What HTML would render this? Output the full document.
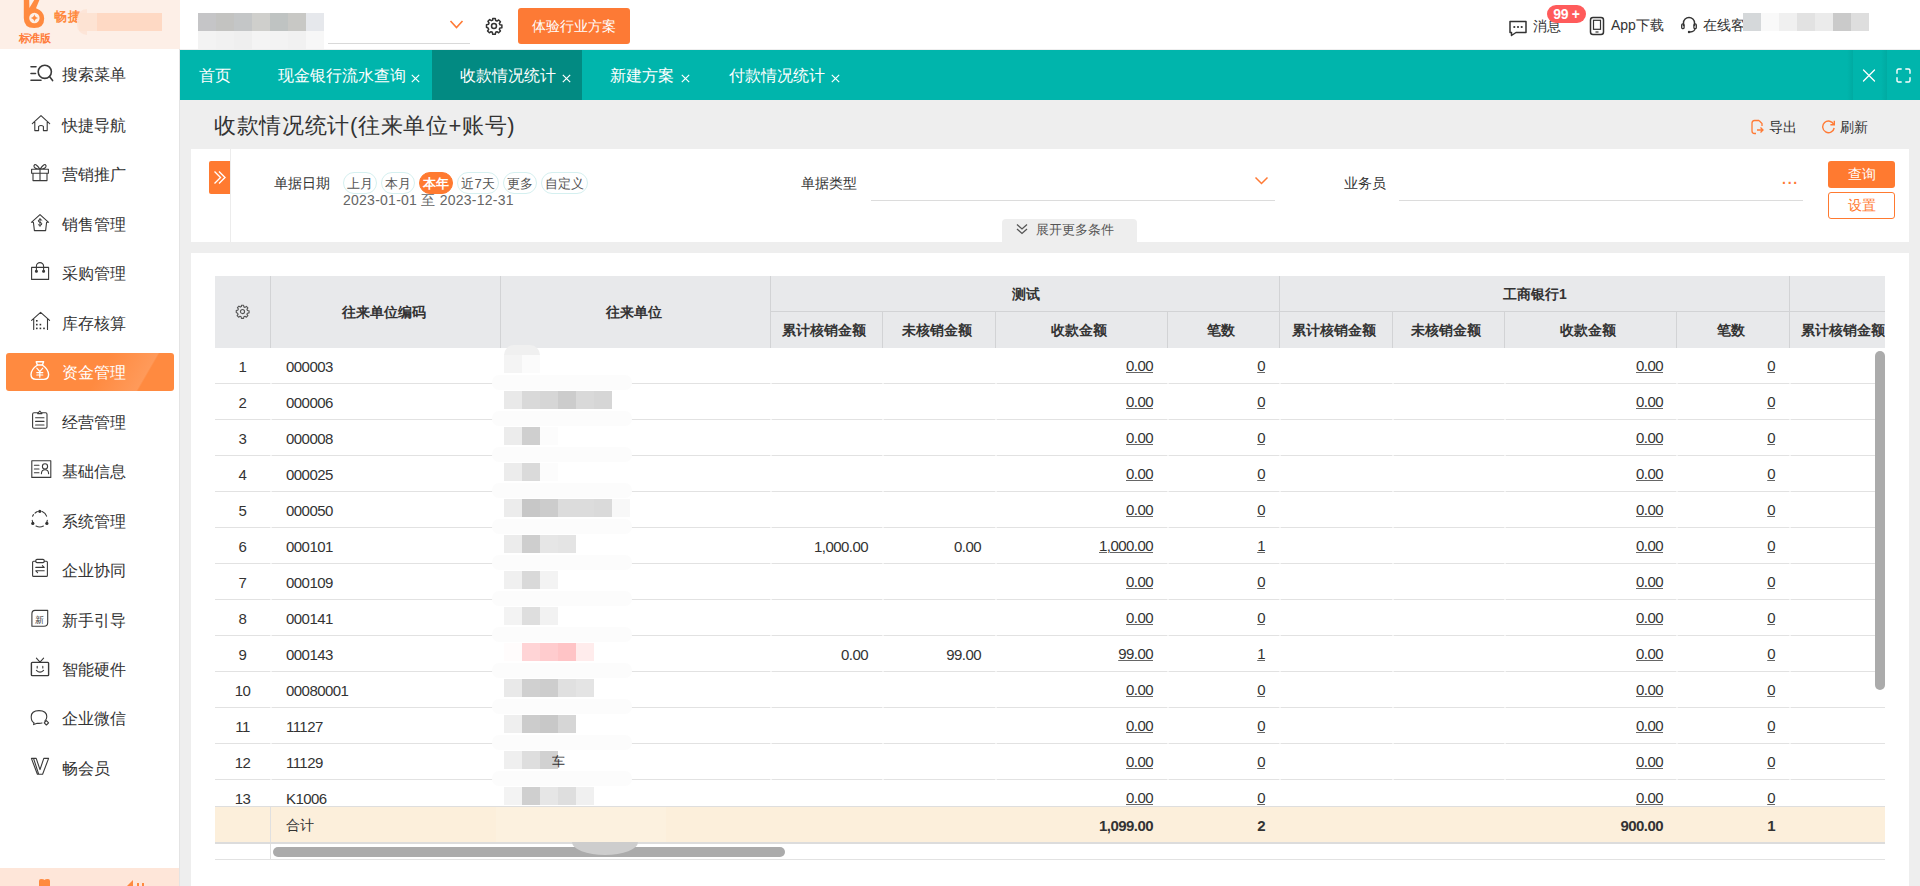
<!DOCTYPE html>
<html><head><meta charset="utf-8"><style>
*{box-sizing:border-box;margin:0;padding:0}
html,body{width:1920px;height:886px;overflow:hidden;background:#eeeeee;font-family:"Liberation Sans",sans-serif;color:#333}
.a{position:absolute}
#side{position:absolute;left:0;top:0;width:180px;height:886px;background:#fff;border-right:1px solid #e4e4e4}
#logo{position:absolute;left:0;top:0;width:180px;height:49px;background:#fdefe7}
.mi{position:absolute;left:0;width:179px;height:38px;font-size:16px;line-height:38px;color:#333;white-space:nowrap}
.mi span{position:absolute;left:62px;top:0}
.mi svg{position:absolute;left:31px;top:10px}
.mi.act{left:6px;width:168px;background:#ff8a44;border-radius:3px;color:#fff}
.mi.act span{left:56px}
.mi.act svg{left:25px}
#hdr{position:absolute;left:180px;top:0;width:1740px;height:49px;background:#fff}
#tabs{position:absolute;left:180px;top:50px;width:1740px;height:50px;background:#00b5ac}
.tab{position:absolute;top:0;height:50px;line-height:50px;font-size:16px;color:#fff;white-space:nowrap}
.tab .x{font-size:14px;margin-left:4px}
.t14{font-size:14px;line-height:20px;white-space:nowrap}
.chip{position:absolute;top:172px;height:22px;border:1px solid #d5f0f0;border-radius:11px;font-size:13px;line-height:22px;text-align:center;color:#555;background:#fff}
.chip.on{background:#ff7a30;border-color:#ff7a30;color:#fff;font-weight:bold}
.th{position:absolute;background:#e8e9eb;font-size:14px;font-weight:bold;color:#333;text-align:center;white-space:nowrap;overflow:hidden}
.vl{position:absolute;width:1px;background:#d6d6d6}
.hl{position:absolute;height:1px;background:#e2e2e2}
.td{position:absolute;font-size:15px;line-height:20px;color:#333;white-space:nowrap;letter-spacing:-0.55px}
.u{text-decoration:underline;text-decoration-thickness:1px;text-underline-offset:1px;text-decoration-color:#666}

</style></head><body>
<div id="side"><div id="logo">
<svg class="a" style="left:22px;top:0" width="24" height="29" viewBox="0 0 24 29">
<path d="M1.8 0 H7.2 L7.4 8 L12.2 0 H17.4 L14 8.2 Q22.2 11 22.2 18.5 Q22.2 28 12.2 28 Q1.8 28 1.8 18 Z" fill="#ff8a3f"/>
<circle cx="12.4" cy="18" r="5.2" fill="#fdefe7"/>
<path d="M12.4 14.2 Q13 17.4 16.2 18 Q13 18.6 12.4 21.8 Q11.8 18.6 8.6 18 Q11.8 17.4 12.4 14.2Z" fill="#ff8a3f"/>
</svg>
<div class="a" style="left:18.5px;top:30px;font-size:11px;line-height:16px;color:#ff7d3b;font-weight:bold;letter-spacing:-0.5px">标准版</div>
<div class="a" style="left:53.5px;top:8px;font-size:13px;line-height:18px;color:#ff8a3f;font-weight:bold;letter-spacing:1px">畅捷</div>
<div class="a" style="left:77px;top:9px;width:10px;height:26px;background:rgba(253,228,214,0.93);border-radius:10px 0 0 10px"></div>
<div class="a" style="left:79px;top:13px;width:83px;height:18px;background:#fed9c4"></div>
<div class="a" style="left:79px;top:13px;width:18px;height:18px;background:#fde3d3"></div>
</div>
<div class="mi" style="top:56px"><span>搜索菜单</span></div>
<div class="mi" style="top:107px"><span>快捷导航</span></div>
<div class="mi" style="top:156px"><span>营销推广</span></div>
<div class="mi" style="top:206px"><span>销售管理</span></div>
<div class="mi" style="top:255px"><span>采购管理</span></div>
<div class="mi" style="top:305px"><span>库存核算</span></div>
<div class="a" style="left:6px;top:353px;width:168px;height:38px;background:linear-gradient(120deg,#ff8a40 0%,#ff8a40 55%,#ff9a5a 80%,#ff8a40 81%);border-radius:3px"></div>
<div class="mi" style="top:354px;color:#fff"><span>资金管理</span></div>
<div class="mi" style="top:404px"><span>经营管理</span></div>
<div class="mi" style="top:453px"><span>基础信息</span></div>
<div class="mi" style="top:503px"><span>系统管理</span></div>
<div class="mi" style="top:552px"><span>企业协同</span></div>
<div class="mi" style="top:602px"><span>新手引导</span></div>
<div class="mi" style="top:651px"><span>智能硬件</span></div>
<div class="mi" style="top:700px"><span>企业微信</span></div>
<div class="mi" style="top:750px"><span>畅会员</span></div>
<svg class="a" style="left:0;top:0" width="180" height="886" viewBox="0 0 180 886">
<g fill="none" stroke="#3a3a3a" stroke-width="1.1" stroke-linecap="round" stroke-linejoin="round">
<path d="M31 66.8h5M31 73.5h4.5M31 80.2h10" stroke-width="1.6"/>
<circle cx="44.8" cy="71.8" r="6.6" stroke-width="1.6"/><path d="M49.5 76.5L52.6 80.6" stroke-width="1.6"/>
<path d="M32.3 123.6L41 115.6L49.7 123.6M34.8 121.3V130.6H38.6V126.4Q41 124.6 43.4 126.4V130.6H47.2V121.3"/>
<path d="M31.6 169.2H48.4V173.2H31.6ZM33 173.2V180.6H47V173.2M40 169.2V180.6M40 169.2Q35.5 162.5 34 165.5Q33.2 168.5 40 169.2M40 169.2Q44.5 162.5 46 165.5Q46.8 168.5 40 169.2"/>
<path d="M40 214.6L48.6 222.3H46.6L45.6 230.6H34.4L33.4 222.3H31.4Z"/>
<path d="M42 220.3Q41.5 219.6 40 219.6Q38.3 219.6 38.3 220.9Q38.3 222.1 40 222.3Q41.8 222.5 41.8 223.9Q41.8 225.3 40 225.3Q38.6 225.3 38.1 224.5M40 218.4V226.4" stroke-width="1"/>
<path d="M31.6 267.4H48.6V279.4H31.6Z"/><path d="M36.4 271.2V266.2A3.6 3.6 0 0 1 43.6 266.2V271.2"/>
<circle cx="36.4" cy="271.2" r="1" fill="#333"/><circle cx="43.6" cy="271.2" r="1" fill="#333"/>
<path d="M31.6 320.4L40.6 312.3L49.6 320.4M33.7 318.6V329.4M47.5 318.6V329.4"/>
<g fill="#333" stroke="none"><rect x="36" y="320" width="1.6" height="1.6"/><rect x="36" y="323.8" width="1.6" height="1.6"/><rect x="39.6" y="323.8" width="1.6" height="1.6"/><rect x="36" y="327.6" width="1.6" height="1.6"/><rect x="39.6" y="327.6" width="1.6" height="1.6"/><rect x="43.2" y="327.6" width="1.6" height="1.6"/></g>
</g>
<g fill="none" stroke="#fff" stroke-width="1.4" stroke-linecap="round" stroke-linejoin="round">
<path d="M36.2 361.8H43.6L42.4 365H37.4Z"/>
<path d="M37.4 365Q31 369.5 31 374.6Q31 379.4 36 379.4H43.8Q48.6 379.4 48.6 374.6Q48.6 369.5 42.4 365"/>
<path d="M36.8 368.2L39.8 371.6L42.8 368.2M39.8 371.6V377.2M36.8 372.6H42.8M36.8 375H42.8" stroke-width="1.2"/>
</g>
<g fill="none" stroke="#3a3a3a" stroke-width="1.1" stroke-linecap="round" stroke-linejoin="round">
<path d="M38 412.8H34Q32.6 412.8 32.6 414.2V427Q32.6 428.2 34 428.2H45.6Q47 428.2 47 427V414.2Q47 412.8 45.6 412.8H41.8"/>
<path d="M37.6 413.6L39.8 411L42 413.6Z"/>
<path d="M35.6 417.8H44M35.6 421.4H44M35.6 425H44"/>
<path d="M31.8 460.8H50.8V477.4H31.8Z"/>
<path d="M34.4 465.2H39M34.4 469H39M34.4 472.8H39"/>
<circle cx="45" cy="466.4" r="2.6"/><path d="M41.4 473.6Q41.6 469.8 45 469.8Q48.4 469.8 48.6 473.6"/>
<path d="M35 513.2A7.6 7.6 0 0 1 37.4 511.5M42.2 511.5A7.6 7.6 0 0 1 46.6 516.2M47.3 520.2A7.6 7.6 0 0 1 46.2 523.5M43.4 526A7.6 7.6 0 0 1 36 526M33.4 523.5A7.6 7.6 0 0 1 32.2 520.2M32.6 516.2A7.6 7.6 0 0 1 33.5 514.6"/>
<g fill="#333" stroke="none"><circle cx="39.8" cy="511.3" r="1.6"/><circle cx="32.8" cy="523.4" r="1.6"/><circle cx="46.9" cy="523.4" r="1.6"/></g>
<path d="M35.8 561.2H33.6Q32.6 561.2 32.6 562.2V575.4Q32.6 576.4 33.6 576.4H46.4Q47.4 576.4 47.4 575.4V562.2Q47.4 561.2 46.4 561.2H44.2"/>
<rect x="35.8" y="559.4" width="8.4" height="3.2" rx="1.2"/>
<path d="M35.8 567.4H44.2L42.4 565.6M44.2 570.8H35.8L37.6 572.6"/>
<path d="M35 610.4H47.7V622.4Q47.7 626.2 43.9 626.2H31.9V614Q31.9 610.4 35 610.4Z"/>
<path d="M32.4 662.4H47.8Q48.6 662.4 48.6 663.2V675Q48.6 675.6 47.8 675.6H32.4Q31.4 675.6 31.4 675V663.2Q31.4 662.4 32.4 662.4Z" stroke-width="1.4"/>
<path d="M36.4 658.2L40 662.2L43.6 658.2M37.2 666.4V668M42.8 666.4V668M36.4 670.4Q40 674 43.6 670.4"/>
<path d="M44.8 721.2Q46.8 719.2 46.8 716.8Q46.8 710.6 39 710.6Q31.2 710.6 31.2 716.8Q31.2 721.5 34 722.7L33.6 724.6L37.2 723.2Q39.6 723.6 42 723"/>
<path d="M46.4 720.6L48.6 722.8L46.4 725L44.2 722.8Z"/>
<path d="M31.4 758.4H36.2L40 769.6L43.8 758.4H48.6L42.6 774.2H37.4ZM33.6 758.6L38.6 773.8"/>
</g>
<text x="39.8" y="622.6" font-size="9" text-anchor="middle" fill="#333" font-family="Liberation Sans">新</text>
</svg>
<div class="a" style="left:0;top:868px;width:179px;height:18px;background:#fee6d9"></div>
<svg class="a" style="left:0;top:868px" width="179" height="18" viewBox="0 0 179 18"><path d="M39 18V13Q39 11 41 11Q44 11 44.5 12Q45 11 48 11Q50 11 50 13V18Z" fill="#ff8a3f"/><path d="M127 18L133 12V18Z" fill="#ff8a3f"/><rect x="137" y="15" width="2" height="3" fill="#ff8a3f"/><rect x="142" y="15" width="2" height="3" fill="#ff8a3f"/></svg>
</div>
<div id="hdr">
<div class="a" style="left:18px;top:13px;width:18px;height:18px;background:#c5c5c7"></div>
<div class="a" style="left:36px;top:13px;width:18px;height:18px;background:#c3c3c1"></div>
<div class="a" style="left:54px;top:13px;width:18px;height:18px;background:#c4c6c7"></div>
<div class="a" style="left:72px;top:13px;width:18px;height:18px;background:#cfcfcc"></div>
<div class="a" style="left:90px;top:13px;width:18px;height:18px;background:#bfc3c2"></div>
<div class="a" style="left:108px;top:13px;width:18px;height:18px;background:#c8c8c5"></div>
<div class="a" style="left:126px;top:13px;width:18px;height:18px;background:#e6e8ec"></div>
<div class="a" style="left:18px;top:31px;width:18px;height:18px;background:#f3f3f3"></div>
<div class="a" style="left:36px;top:31px;width:18px;height:18px;background:#f1f1f1"></div>
<div class="a" style="left:54px;top:31px;width:18px;height:18px;background:#efefef"></div>
<div class="a" style="left:72px;top:31px;width:18px;height:18px;background:#f4f4f4"></div>
<div class="a" style="left:90px;top:31px;width:18px;height:18px;background:#f3f3f3"></div>
<div class="a" style="left:108px;top:31px;width:18px;height:18px;background:#f1f1f1"></div>
<div class="a" style="left:126px;top:31px;width:18px;height:18px;background:#f7f7f7"></div>
<div class="a" style="left:148px;top:43px;width:142px;height:1px;background:#d9d9d9"></div>
<svg class="a" style="left:269px;top:19px" width="15" height="11" viewBox="0 0 15 11"><path d="M1.5 2 L7.5 8.5 L13.5 2" stroke="#ff7a35" stroke-width="1.6" fill="none"/></svg>
<svg class="a" style="left:305px;top:17px" width="18" height="18" viewBox="0 0 24 24"><path d="M10.3 2h3.4l.5 2.6 1.8.8 2.2-1.5 2.4 2.4-1.5 2.2.8 1.8 2.6.5v3.4l-2.6.5-.8 1.8 1.5 2.2-2.4 2.4-2.2-1.5-1.8.8-.5 2.6h-3.4l-.5-2.6-1.8-.8-2.2 1.5-2.4-2.4 1.5-2.2-.8-1.8L2 13.7v-3.4l2.6-.5.8-1.8-1.5-2.2 2.4-2.4 2.2 1.5 1.8-.8z" fill="none" stroke="#333" stroke-width="2" stroke-linejoin="round"/><circle cx="12" cy="12" r="3.3" fill="none" stroke="#333" stroke-width="2"/></svg>
<div class="a" style="left:338px;top:8px;width:112px;height:36px;background:#fd7a35;border-radius:3px;color:#fff;font-size:14px;line-height:36px;text-align:center">体验行业方案</div>
<svg class="a" style="left:1328px;top:19px" width="20" height="20" viewBox="0 0 20 20"><path d="M2 2.5h16v11H8l-4.5 3v-3H2z" fill="none" stroke="#333" stroke-width="1.5" stroke-linejoin="round"/><circle cx="6.3" cy="8" r="1.1" fill="#333"/><circle cx="10" cy="8" r="1.1" fill="#333"/><circle cx="13.7" cy="8" r="1.1" fill="#333"/></svg>
<div class="a" style="left:1353px;top:16px;font-size:14px;line-height:20px;color:#333">消息</div>
<div class="a" style="left:1367px;top:5px;width:39px;height:18px;background:#ff5b5b;border-radius:9px;color:#fff;font-size:14px;font-weight:bold;line-height:18px;text-align:center;letter-spacing:-0.3px">99 +</div>
<svg class="a" style="left:1409px;top:16px" width="16" height="20" viewBox="0 0 16 20"><rect x="1.5" y="1.5" width="13" height="17" rx="2.5" fill="none" stroke="#333" stroke-width="1.5"/><rect x="4.5" y="4.3" width="7" height="9" fill="none" stroke="#333" stroke-width="1.2"/><path d="M6.5 16h3" stroke="#333" stroke-width="1.2"/></svg>
<div class="a" style="left:1431px;top:15px;font-size:14px;line-height:20px;color:#333">App下载</div>
<svg class="a" style="left:1500px;top:15px" width="18" height="19" viewBox="0 0 18 19"><path d="M3.5 11V8a5.5 5.5 0 0 1 11 0v3" fill="none" stroke="#333" stroke-width="1.4"/><rect x="1.7" y="8.8" width="2.4" height="4.8" rx="1.2" fill="none" stroke="#333" stroke-width="1.3"/><rect x="13.9" y="8.8" width="2.4" height="4.8" rx="1.2" fill="none" stroke="#333" stroke-width="1.3"/><path d="M15 13.5q0 3-5 3.5" fill="none" stroke="#333" stroke-width="1.3"/><circle cx="9" cy="17" r="1.2" fill="#333"/></svg>
<div class="a" style="left:1523px;top:15px;font-size:14px;line-height:20px;color:#333;width:42px;overflow:hidden;white-space:nowrap">在线客服</div>
<div class="a" style="left:1563px;top:13px;width:18px;height:18px;background:#d5d8da"></div>
<div class="a" style="left:1581px;top:13px;width:18px;height:18px;background:#f9f9f9"></div>
<div class="a" style="left:1599px;top:13px;width:18px;height:18px;background:#f0f0f0"></div>
<div class="a" style="left:1617px;top:13px;width:18px;height:18px;background:#e2e2e2"></div>
<div class="a" style="left:1635px;top:13px;width:18px;height:18px;background:#ebebeb"></div>
<div class="a" style="left:1653px;top:13px;width:18px;height:18px;background:#cacaca"></div>
<div class="a" style="left:1671px;top:13px;width:18px;height:18px;background:#dedede"></div>
</div>
<div id="tabs">
<div class="a" style="left:252px;top:0;width:150px;height:50px;background:#028a82"></div>
<div class="tab" style="left:19px;top:1px">首页</div>
<div class="tab" style="left:98px;top:1px">现金银行流水查询</div>
<div class="tab" style="left:280px;top:1px">收款情况统计</div>
<div class="tab" style="left:430px;top:1px">新建方案</div>
<div class="tab" style="left:549px;top:1px">付款情况统计</div>
<svg class="a" style="left:231px;top:24px" width="9" height="9" viewBox="0 0 9 9"><path d="M0.8 0.8L8.2 8.2M8.2 0.8L0.8 8.2" stroke="#fff" stroke-width="1.2"/></svg>
<svg class="a" style="left:382px;top:24px" width="9" height="9" viewBox="0 0 9 9"><path d="M0.8 0.8L8.2 8.2M8.2 0.8L0.8 8.2" stroke="#fff" stroke-width="1.2"/></svg>
<svg class="a" style="left:501px;top:24px" width="9" height="9" viewBox="0 0 9 9"><path d="M0.8 0.8L8.2 8.2M8.2 0.8L0.8 8.2" stroke="#fff" stroke-width="1.2"/></svg>
<svg class="a" style="left:651px;top:24px" width="9" height="9" viewBox="0 0 9 9"><path d="M0.8 0.8L8.2 8.2M8.2 0.8L0.8 8.2" stroke="#fff" stroke-width="1.2"/></svg>
<div class="a" style="left:1667px;top:0;width:6px;height:50px;background:linear-gradient(90deg,rgba(0,80,75,0) 0%,rgba(0,80,75,0.10) 100%)"></div>
<div class="a" style="left:1701px;top:0;width:6px;height:50px;background:linear-gradient(90deg,rgba(0,80,75,0) 0%,rgba(0,80,75,0.10) 100%)"></div>
<svg class="a" style="left:1682px;top:19px" width="14" height="13" viewBox="0 0 14 13"><path d="M1.5 1L12.5 12M12.5 1L1.5 12" stroke="#fff" stroke-width="1.3" stroke-linecap="round"/></svg>
<svg class="a" style="left:1716px;top:18px" width="15" height="15" viewBox="0 0 15 15"><path d="M1 5.2V2.6Q1 1 2.6 1H5.2M9.8 1H12.4Q14 1 14 2.6V5.2M14 9.8V12.4Q14 14 12.4 14H9.8M5.2 14H2.6Q1 14 1 12.4V9.8" stroke="#fff" stroke-width="1.4" fill="none" stroke-linecap="round"/></svg>
</div>
<div class="a" style="left:214px;top:111px;font-size:22px;line-height:30px;color:#333;white-space:nowrap;letter-spacing:0.65px">收款情况统计(往来单位+账号)</div>
<svg class="a" style="left:1750px;top:119px" width="14" height="16" viewBox="0 0 14 16"><path d="M9 1.5H4.5Q2 1.5 2 4v8q0 2.5 2.5 2.5H6M9 1.5L12 4.5V7" fill="none" stroke="#ff7a35" stroke-width="1.3"/><path d="M7 11h6M10.5 8.5L13 11l-2.5 2.5" fill="none" stroke="#ff7a35" stroke-width="1.3"/></svg>
<div class="a t14" style="left:1769px;top:117px;color:#333">导出</div>
<svg class="a" style="left:1821px;top:119px" width="15" height="15" viewBox="0 0 15 15"><path d="M12.8 5.5A5.8 5.8 0 1 0 13.2 9" fill="none" stroke="#ff7a35" stroke-width="1.4"/><path d="M13.3 1.8v3.9H9.4" fill="none" stroke="#ff7a35" stroke-width="1.4"/></svg>
<div class="a t14" style="left:1840px;top:117px;color:#333">刷新</div>
<div class="a" style="left:191px;top:149px;width:1718px;height:93px;background:#fff"></div>
<div class="a" style="left:230px;top:149px;width:1px;height:93px;background:#ececec"></div>
<div class="a" style="left:209px;top:161px;width:21px;height:33px;background:#ff7a30;border-radius:2px 0 0 2px"></div>
<svg class="a" style="left:213px;top:170px" width="15" height="15" viewBox="0 0 15 15"><path d="M1.5 1.5l6 6-6 6M6 1.5l6 6-6 6" fill="none" stroke="#fff" stroke-width="1.4"/></svg>
<div class="a t14" style="left:274px;top:173px">单据日期</div>
<div class="chip" style="left:343px;width:34px">上月</div>
<div class="chip" style="left:381px;width:34px">本月</div>
<div class="chip on" style="left:419px;width:34px">本年</div>
<div class="chip" style="left:457px;width:42px">近7天</div>
<div class="chip" style="left:503px;width:34px">更多</div>
<div class="chip" style="left:541px;width:47px">自定义</div>
<div class="a t14" style="left:343px;top:190px;color:#666;letter-spacing:0.25px">2023-01-01 至 2023-12-31</div>
<div class="a t14" style="left:801px;top:173px">单据类型</div>
<div class="a" style="left:871px;top:200px;width:404px;height:1px;background:#dcdcdc"></div>
<svg class="a" style="left:1254px;top:176px" width="15" height="10" viewBox="0 0 15 10"><path d="M1.5 1.5L7.5 7.5L13.5 1.5" fill="none" stroke="#ff7a35" stroke-width="1.5"/></svg>
<div class="a" style="left:1002px;top:219px;width:135px;height:23px;background:#eeeeee;border-radius:4px 4px 0 0"></div>
<svg class="a" style="left:1015px;top:222px" width="14" height="14" viewBox="0 0 14 14"><path d="M2 2.5l5 4.5 5-4.5M2 7l5 4.5 5-4.5" fill="none" stroke="#555" stroke-width="1.3"/></svg>
<div class="a" style="left:1036px;top:220px;font-size:13px;line-height:20px;color:#555;white-space:nowrap">展开更多条件</div>
<div class="a t14" style="left:1344px;top:173px">业务员</div>
<div class="a" style="left:1399px;top:200px;width:404px;height:1px;background:#dcdcdc"></div>
<div class="a" style="left:1782px;top:175px;font-size:14px;color:#ff7a35;font-weight:bold;letter-spacing:1px">···</div>
<div class="a" style="left:1828px;top:161px;width:67px;height:27px;background:#ff7a30;border-radius:3px;color:#fff;font-size:14px;line-height:27px;text-align:center">查询</div>
<div class="a" style="left:1828px;top:192px;width:67px;height:27px;background:#fff;border:1px solid #ff7a30;border-radius:3px;color:#ff7a30;font-size:14px;line-height:25px;text-align:center">设置</div>
<div class="a" style="left:191px;top:253px;width:1718px;height:633px;background:#fff"></div>
<div class="a" style="left:215px;top:276px;width:1670px;height:72px;background:#e8e9eb"></div>
<div class="vl" style="left:270px;top:276px;height:72px;background:#d2d3d5"></div>
<div class="vl" style="left:500px;top:276px;height:72px;background:#d2d3d5"></div>
<div class="vl" style="left:770px;top:276px;height:72px;background:#d2d3d5"></div>
<div class="vl" style="left:1279px;top:276px;height:72px;background:#d2d3d5"></div>
<div class="vl" style="left:1789px;top:276px;height:72px;background:#d2d3d5"></div>
<div class="vl" style="left:882px;top:311px;height:37px;background:#d2d3d5"></div>
<div class="vl" style="left:995px;top:311px;height:37px;background:#d2d3d5"></div>
<div class="vl" style="left:1167px;top:311px;height:37px;background:#d2d3d5"></div>
<div class="vl" style="left:1392px;top:311px;height:37px;background:#d2d3d5"></div>
<div class="vl" style="left:1504px;top:311px;height:37px;background:#d2d3d5"></div>
<div class="vl" style="left:1676px;top:311px;height:37px;background:#d2d3d5"></div>
<div class="a" style="left:770px;top:311px;width:1115px;height:1px;background:#d2d3d5"></div>
<svg class="a" style="left:235px;top:304px" width="15" height="15" viewBox="0 0 24 24"><path d="M10.3 2h3.4l.5 2.6 1.8.8 2.2-1.5 2.4 2.4-1.5 2.2.8 1.8 2.6.5v3.4l-2.6.5-.8 1.8 1.5 2.2-2.4 2.4-2.2-1.5-1.8.8-.5 2.6h-3.4l-.5-2.6-1.8-.8-2.2 1.5-2.4-2.4 1.5-2.2-.8-1.8L2 13.7v-3.4l2.6-.5.8-1.8-1.5-2.2 2.4-2.4 2.2 1.5 1.8-.8z" fill="none" stroke="#555" stroke-width="1.8" stroke-linejoin="round"/><circle cx="12" cy="12" r="3.3" fill="none" stroke="#555" stroke-width="1.8"/></svg>
<div class="a" style="left:269px;top:276px;width:230px;height:72px;line-height:72px;text-align:center;font-size:14px;font-weight:bold;color:#333;white-space:nowrap;overflow:hidden">往来单位编码</div>
<div class="a" style="left:499px;top:276px;width:270px;height:72px;line-height:72px;text-align:center;font-size:14px;font-weight:bold;color:#333;white-space:nowrap;overflow:hidden">往来单位</div>
<div class="a" style="left:771px;top:277px;width:509px;height:35px;line-height:35px;text-align:center;font-size:14px;font-weight:bold;color:#333;white-space:nowrap;overflow:hidden">测试</div>
<div class="a" style="left:1280px;top:277px;width:510px;height:35px;line-height:35px;text-align:center;font-size:14px;font-weight:bold;color:#333;white-space:nowrap;overflow:hidden">工商银行1</div>
<div class="a" style="left:768px;top:312px;width:112px;height:37px;line-height:37px;text-align:center;font-size:14px;font-weight:bold;color:#333;white-space:nowrap;overflow:hidden">累计核销金额</div>
<div class="a" style="left:880px;top:312px;width:113px;height:37px;line-height:37px;text-align:center;font-size:14px;font-weight:bold;color:#333;white-space:nowrap;overflow:hidden">未核销金额</div>
<div class="a" style="left:993px;top:312px;width:172px;height:37px;line-height:37px;text-align:center;font-size:14px;font-weight:bold;color:#333;white-space:nowrap;overflow:hidden">收款金额</div>
<div class="a" style="left:1165px;top:312px;width:112px;height:37px;line-height:37px;text-align:center;font-size:14px;font-weight:bold;color:#333;white-space:nowrap;overflow:hidden">笔数</div>
<div class="a" style="left:1277px;top:312px;width:113px;height:37px;line-height:37px;text-align:center;font-size:14px;font-weight:bold;color:#333;white-space:nowrap;overflow:hidden">累计核销金额</div>
<div class="a" style="left:1390px;top:312px;width:112px;height:37px;line-height:37px;text-align:center;font-size:14px;font-weight:bold;color:#333;white-space:nowrap;overflow:hidden">未核销金额</div>
<div class="a" style="left:1502px;top:312px;width:172px;height:37px;line-height:37px;text-align:center;font-size:14px;font-weight:bold;color:#333;white-space:nowrap;overflow:hidden">收款金额</div>
<div class="a" style="left:1674px;top:312px;width:113px;height:37px;line-height:37px;text-align:center;font-size:14px;font-weight:bold;color:#333;white-space:nowrap;overflow:hidden">笔数</div>
<div class="a" style="left:1789px;top:312px;width:96px;height:37px;line-height:37px;padding-left:12px;font-size:14px;font-weight:bold;color:#333;white-space:nowrap;overflow:hidden">累计核销金额</div>
<div class="hl" style="left:215px;top:383px;width:1670px"></div>
<div class="a" style="left:270px;top:383px;width:2px;height:1px;background:#f3f3f3"></div>
<div class="a" style="left:500px;top:383px;width:2px;height:1px;background:#f3f3f3"></div>
<div class="a" style="left:770px;top:383px;width:2px;height:1px;background:#f3f3f3"></div>
<div class="a" style="left:882px;top:383px;width:2px;height:1px;background:#f3f3f3"></div>
<div class="a" style="left:995px;top:383px;width:2px;height:1px;background:#f3f3f3"></div>
<div class="a" style="left:1167px;top:383px;width:2px;height:1px;background:#f3f3f3"></div>
<div class="a" style="left:1279px;top:383px;width:2px;height:1px;background:#f3f3f3"></div>
<div class="a" style="left:1392px;top:383px;width:2px;height:1px;background:#f3f3f3"></div>
<div class="a" style="left:1504px;top:383px;width:2px;height:1px;background:#f3f3f3"></div>
<div class="a" style="left:1676px;top:383px;width:2px;height:1px;background:#f3f3f3"></div>
<div class="a" style="left:1789px;top:383px;width:2px;height:1px;background:#f3f3f3"></div>
<div class="td" style="left:215px;top:357px;width:55px;text-align:center">1</div>
<div class="td" style="left:286px;top:357px">000003</div>
<div class="td u" style="right:767px;top:356px">0.00</div>
<div class="td u" style="right:655px;top:356px">0</div>
<div class="td u" style="right:257px;top:356px">0.00</div>
<div class="td u" style="right:145px;top:356px">0</div>
<div class="hl" style="left:215px;top:419px;width:1670px"></div>
<div class="a" style="left:270px;top:419px;width:2px;height:1px;background:#f3f3f3"></div>
<div class="a" style="left:500px;top:419px;width:2px;height:1px;background:#f3f3f3"></div>
<div class="a" style="left:770px;top:419px;width:2px;height:1px;background:#f3f3f3"></div>
<div class="a" style="left:882px;top:419px;width:2px;height:1px;background:#f3f3f3"></div>
<div class="a" style="left:995px;top:419px;width:2px;height:1px;background:#f3f3f3"></div>
<div class="a" style="left:1167px;top:419px;width:2px;height:1px;background:#f3f3f3"></div>
<div class="a" style="left:1279px;top:419px;width:2px;height:1px;background:#f3f3f3"></div>
<div class="a" style="left:1392px;top:419px;width:2px;height:1px;background:#f3f3f3"></div>
<div class="a" style="left:1504px;top:419px;width:2px;height:1px;background:#f3f3f3"></div>
<div class="a" style="left:1676px;top:419px;width:2px;height:1px;background:#f3f3f3"></div>
<div class="a" style="left:1789px;top:419px;width:2px;height:1px;background:#f3f3f3"></div>
<div class="td" style="left:215px;top:393px;width:55px;text-align:center">2</div>
<div class="td" style="left:286px;top:393px">000006</div>
<div class="td u" style="right:767px;top:392px">0.00</div>
<div class="td u" style="right:655px;top:392px">0</div>
<div class="td u" style="right:257px;top:392px">0.00</div>
<div class="td u" style="right:145px;top:392px">0</div>
<div class="hl" style="left:215px;top:455px;width:1670px"></div>
<div class="a" style="left:270px;top:455px;width:2px;height:1px;background:#f3f3f3"></div>
<div class="a" style="left:500px;top:455px;width:2px;height:1px;background:#f3f3f3"></div>
<div class="a" style="left:770px;top:455px;width:2px;height:1px;background:#f3f3f3"></div>
<div class="a" style="left:882px;top:455px;width:2px;height:1px;background:#f3f3f3"></div>
<div class="a" style="left:995px;top:455px;width:2px;height:1px;background:#f3f3f3"></div>
<div class="a" style="left:1167px;top:455px;width:2px;height:1px;background:#f3f3f3"></div>
<div class="a" style="left:1279px;top:455px;width:2px;height:1px;background:#f3f3f3"></div>
<div class="a" style="left:1392px;top:455px;width:2px;height:1px;background:#f3f3f3"></div>
<div class="a" style="left:1504px;top:455px;width:2px;height:1px;background:#f3f3f3"></div>
<div class="a" style="left:1676px;top:455px;width:2px;height:1px;background:#f3f3f3"></div>
<div class="a" style="left:1789px;top:455px;width:2px;height:1px;background:#f3f3f3"></div>
<div class="td" style="left:215px;top:429px;width:55px;text-align:center">3</div>
<div class="td" style="left:286px;top:429px">000008</div>
<div class="td u" style="right:767px;top:428px">0.00</div>
<div class="td u" style="right:655px;top:428px">0</div>
<div class="td u" style="right:257px;top:428px">0.00</div>
<div class="td u" style="right:145px;top:428px">0</div>
<div class="hl" style="left:215px;top:491px;width:1670px"></div>
<div class="a" style="left:270px;top:491px;width:2px;height:1px;background:#f3f3f3"></div>
<div class="a" style="left:500px;top:491px;width:2px;height:1px;background:#f3f3f3"></div>
<div class="a" style="left:770px;top:491px;width:2px;height:1px;background:#f3f3f3"></div>
<div class="a" style="left:882px;top:491px;width:2px;height:1px;background:#f3f3f3"></div>
<div class="a" style="left:995px;top:491px;width:2px;height:1px;background:#f3f3f3"></div>
<div class="a" style="left:1167px;top:491px;width:2px;height:1px;background:#f3f3f3"></div>
<div class="a" style="left:1279px;top:491px;width:2px;height:1px;background:#f3f3f3"></div>
<div class="a" style="left:1392px;top:491px;width:2px;height:1px;background:#f3f3f3"></div>
<div class="a" style="left:1504px;top:491px;width:2px;height:1px;background:#f3f3f3"></div>
<div class="a" style="left:1676px;top:491px;width:2px;height:1px;background:#f3f3f3"></div>
<div class="a" style="left:1789px;top:491px;width:2px;height:1px;background:#f3f3f3"></div>
<div class="td" style="left:215px;top:465px;width:55px;text-align:center">4</div>
<div class="td" style="left:286px;top:465px">000025</div>
<div class="td u" style="right:767px;top:464px">0.00</div>
<div class="td u" style="right:655px;top:464px">0</div>
<div class="td u" style="right:257px;top:464px">0.00</div>
<div class="td u" style="right:145px;top:464px">0</div>
<div class="hl" style="left:215px;top:527px;width:1670px"></div>
<div class="a" style="left:270px;top:527px;width:2px;height:1px;background:#f3f3f3"></div>
<div class="a" style="left:500px;top:527px;width:2px;height:1px;background:#f3f3f3"></div>
<div class="a" style="left:770px;top:527px;width:2px;height:1px;background:#f3f3f3"></div>
<div class="a" style="left:882px;top:527px;width:2px;height:1px;background:#f3f3f3"></div>
<div class="a" style="left:995px;top:527px;width:2px;height:1px;background:#f3f3f3"></div>
<div class="a" style="left:1167px;top:527px;width:2px;height:1px;background:#f3f3f3"></div>
<div class="a" style="left:1279px;top:527px;width:2px;height:1px;background:#f3f3f3"></div>
<div class="a" style="left:1392px;top:527px;width:2px;height:1px;background:#f3f3f3"></div>
<div class="a" style="left:1504px;top:527px;width:2px;height:1px;background:#f3f3f3"></div>
<div class="a" style="left:1676px;top:527px;width:2px;height:1px;background:#f3f3f3"></div>
<div class="a" style="left:1789px;top:527px;width:2px;height:1px;background:#f3f3f3"></div>
<div class="td" style="left:215px;top:501px;width:55px;text-align:center">5</div>
<div class="td" style="left:286px;top:501px">000050</div>
<div class="td u" style="right:767px;top:500px">0.00</div>
<div class="td u" style="right:655px;top:500px">0</div>
<div class="td u" style="right:257px;top:500px">0.00</div>
<div class="td u" style="right:145px;top:500px">0</div>
<div class="hl" style="left:215px;top:563px;width:1670px"></div>
<div class="a" style="left:270px;top:563px;width:2px;height:1px;background:#f3f3f3"></div>
<div class="a" style="left:500px;top:563px;width:2px;height:1px;background:#f3f3f3"></div>
<div class="a" style="left:770px;top:563px;width:2px;height:1px;background:#f3f3f3"></div>
<div class="a" style="left:882px;top:563px;width:2px;height:1px;background:#f3f3f3"></div>
<div class="a" style="left:995px;top:563px;width:2px;height:1px;background:#f3f3f3"></div>
<div class="a" style="left:1167px;top:563px;width:2px;height:1px;background:#f3f3f3"></div>
<div class="a" style="left:1279px;top:563px;width:2px;height:1px;background:#f3f3f3"></div>
<div class="a" style="left:1392px;top:563px;width:2px;height:1px;background:#f3f3f3"></div>
<div class="a" style="left:1504px;top:563px;width:2px;height:1px;background:#f3f3f3"></div>
<div class="a" style="left:1676px;top:563px;width:2px;height:1px;background:#f3f3f3"></div>
<div class="a" style="left:1789px;top:563px;width:2px;height:1px;background:#f3f3f3"></div>
<div class="td" style="left:215px;top:537px;width:55px;text-align:center">6</div>
<div class="td" style="left:286px;top:537px">000101</div>
<div class="td" style="right:1052px;top:537px">1,000.00</div>
<div class="td" style="right:939px;top:537px">0.00</div>
<div class="td u" style="right:767px;top:536px">1,000.00</div>
<div class="td u" style="right:655px;top:536px">1</div>
<div class="td u" style="right:257px;top:536px">0.00</div>
<div class="td u" style="right:145px;top:536px">0</div>
<div class="hl" style="left:215px;top:599px;width:1670px"></div>
<div class="a" style="left:270px;top:599px;width:2px;height:1px;background:#f3f3f3"></div>
<div class="a" style="left:500px;top:599px;width:2px;height:1px;background:#f3f3f3"></div>
<div class="a" style="left:770px;top:599px;width:2px;height:1px;background:#f3f3f3"></div>
<div class="a" style="left:882px;top:599px;width:2px;height:1px;background:#f3f3f3"></div>
<div class="a" style="left:995px;top:599px;width:2px;height:1px;background:#f3f3f3"></div>
<div class="a" style="left:1167px;top:599px;width:2px;height:1px;background:#f3f3f3"></div>
<div class="a" style="left:1279px;top:599px;width:2px;height:1px;background:#f3f3f3"></div>
<div class="a" style="left:1392px;top:599px;width:2px;height:1px;background:#f3f3f3"></div>
<div class="a" style="left:1504px;top:599px;width:2px;height:1px;background:#f3f3f3"></div>
<div class="a" style="left:1676px;top:599px;width:2px;height:1px;background:#f3f3f3"></div>
<div class="a" style="left:1789px;top:599px;width:2px;height:1px;background:#f3f3f3"></div>
<div class="td" style="left:215px;top:573px;width:55px;text-align:center">7</div>
<div class="td" style="left:286px;top:573px">000109</div>
<div class="td u" style="right:767px;top:572px">0.00</div>
<div class="td u" style="right:655px;top:572px">0</div>
<div class="td u" style="right:257px;top:572px">0.00</div>
<div class="td u" style="right:145px;top:572px">0</div>
<div class="hl" style="left:215px;top:635px;width:1670px"></div>
<div class="a" style="left:270px;top:635px;width:2px;height:1px;background:#f3f3f3"></div>
<div class="a" style="left:500px;top:635px;width:2px;height:1px;background:#f3f3f3"></div>
<div class="a" style="left:770px;top:635px;width:2px;height:1px;background:#f3f3f3"></div>
<div class="a" style="left:882px;top:635px;width:2px;height:1px;background:#f3f3f3"></div>
<div class="a" style="left:995px;top:635px;width:2px;height:1px;background:#f3f3f3"></div>
<div class="a" style="left:1167px;top:635px;width:2px;height:1px;background:#f3f3f3"></div>
<div class="a" style="left:1279px;top:635px;width:2px;height:1px;background:#f3f3f3"></div>
<div class="a" style="left:1392px;top:635px;width:2px;height:1px;background:#f3f3f3"></div>
<div class="a" style="left:1504px;top:635px;width:2px;height:1px;background:#f3f3f3"></div>
<div class="a" style="left:1676px;top:635px;width:2px;height:1px;background:#f3f3f3"></div>
<div class="a" style="left:1789px;top:635px;width:2px;height:1px;background:#f3f3f3"></div>
<div class="td" style="left:215px;top:609px;width:55px;text-align:center">8</div>
<div class="td" style="left:286px;top:609px">000141</div>
<div class="td u" style="right:767px;top:608px">0.00</div>
<div class="td u" style="right:655px;top:608px">0</div>
<div class="td u" style="right:257px;top:608px">0.00</div>
<div class="td u" style="right:145px;top:608px">0</div>
<div class="hl" style="left:215px;top:671px;width:1670px"></div>
<div class="a" style="left:270px;top:671px;width:2px;height:1px;background:#f3f3f3"></div>
<div class="a" style="left:500px;top:671px;width:2px;height:1px;background:#f3f3f3"></div>
<div class="a" style="left:770px;top:671px;width:2px;height:1px;background:#f3f3f3"></div>
<div class="a" style="left:882px;top:671px;width:2px;height:1px;background:#f3f3f3"></div>
<div class="a" style="left:995px;top:671px;width:2px;height:1px;background:#f3f3f3"></div>
<div class="a" style="left:1167px;top:671px;width:2px;height:1px;background:#f3f3f3"></div>
<div class="a" style="left:1279px;top:671px;width:2px;height:1px;background:#f3f3f3"></div>
<div class="a" style="left:1392px;top:671px;width:2px;height:1px;background:#f3f3f3"></div>
<div class="a" style="left:1504px;top:671px;width:2px;height:1px;background:#f3f3f3"></div>
<div class="a" style="left:1676px;top:671px;width:2px;height:1px;background:#f3f3f3"></div>
<div class="a" style="left:1789px;top:671px;width:2px;height:1px;background:#f3f3f3"></div>
<div class="td" style="left:215px;top:645px;width:55px;text-align:center">9</div>
<div class="td" style="left:286px;top:645px">000143</div>
<div class="td" style="right:1052px;top:645px">0.00</div>
<div class="td" style="right:939px;top:645px">99.00</div>
<div class="td u" style="right:767px;top:644px">99.00</div>
<div class="td u" style="right:655px;top:644px">1</div>
<div class="td u" style="right:257px;top:644px">0.00</div>
<div class="td u" style="right:145px;top:644px">0</div>
<div class="hl" style="left:215px;top:707px;width:1670px"></div>
<div class="a" style="left:270px;top:707px;width:2px;height:1px;background:#f3f3f3"></div>
<div class="a" style="left:500px;top:707px;width:2px;height:1px;background:#f3f3f3"></div>
<div class="a" style="left:770px;top:707px;width:2px;height:1px;background:#f3f3f3"></div>
<div class="a" style="left:882px;top:707px;width:2px;height:1px;background:#f3f3f3"></div>
<div class="a" style="left:995px;top:707px;width:2px;height:1px;background:#f3f3f3"></div>
<div class="a" style="left:1167px;top:707px;width:2px;height:1px;background:#f3f3f3"></div>
<div class="a" style="left:1279px;top:707px;width:2px;height:1px;background:#f3f3f3"></div>
<div class="a" style="left:1392px;top:707px;width:2px;height:1px;background:#f3f3f3"></div>
<div class="a" style="left:1504px;top:707px;width:2px;height:1px;background:#f3f3f3"></div>
<div class="a" style="left:1676px;top:707px;width:2px;height:1px;background:#f3f3f3"></div>
<div class="a" style="left:1789px;top:707px;width:2px;height:1px;background:#f3f3f3"></div>
<div class="td" style="left:215px;top:681px;width:55px;text-align:center">10</div>
<div class="td" style="left:286px;top:681px">00080001</div>
<div class="td u" style="right:767px;top:680px">0.00</div>
<div class="td u" style="right:655px;top:680px">0</div>
<div class="td u" style="right:257px;top:680px">0.00</div>
<div class="td u" style="right:145px;top:680px">0</div>
<div class="hl" style="left:215px;top:743px;width:1670px"></div>
<div class="a" style="left:270px;top:743px;width:2px;height:1px;background:#f3f3f3"></div>
<div class="a" style="left:500px;top:743px;width:2px;height:1px;background:#f3f3f3"></div>
<div class="a" style="left:770px;top:743px;width:2px;height:1px;background:#f3f3f3"></div>
<div class="a" style="left:882px;top:743px;width:2px;height:1px;background:#f3f3f3"></div>
<div class="a" style="left:995px;top:743px;width:2px;height:1px;background:#f3f3f3"></div>
<div class="a" style="left:1167px;top:743px;width:2px;height:1px;background:#f3f3f3"></div>
<div class="a" style="left:1279px;top:743px;width:2px;height:1px;background:#f3f3f3"></div>
<div class="a" style="left:1392px;top:743px;width:2px;height:1px;background:#f3f3f3"></div>
<div class="a" style="left:1504px;top:743px;width:2px;height:1px;background:#f3f3f3"></div>
<div class="a" style="left:1676px;top:743px;width:2px;height:1px;background:#f3f3f3"></div>
<div class="a" style="left:1789px;top:743px;width:2px;height:1px;background:#f3f3f3"></div>
<div class="td" style="left:215px;top:717px;width:55px;text-align:center">11</div>
<div class="td" style="left:286px;top:717px">11127</div>
<div class="td u" style="right:767px;top:716px">0.00</div>
<div class="td u" style="right:655px;top:716px">0</div>
<div class="td u" style="right:257px;top:716px">0.00</div>
<div class="td u" style="right:145px;top:716px">0</div>
<div class="hl" style="left:215px;top:779px;width:1670px"></div>
<div class="a" style="left:270px;top:779px;width:2px;height:1px;background:#f3f3f3"></div>
<div class="a" style="left:500px;top:779px;width:2px;height:1px;background:#f3f3f3"></div>
<div class="a" style="left:770px;top:779px;width:2px;height:1px;background:#f3f3f3"></div>
<div class="a" style="left:882px;top:779px;width:2px;height:1px;background:#f3f3f3"></div>
<div class="a" style="left:995px;top:779px;width:2px;height:1px;background:#f3f3f3"></div>
<div class="a" style="left:1167px;top:779px;width:2px;height:1px;background:#f3f3f3"></div>
<div class="a" style="left:1279px;top:779px;width:2px;height:1px;background:#f3f3f3"></div>
<div class="a" style="left:1392px;top:779px;width:2px;height:1px;background:#f3f3f3"></div>
<div class="a" style="left:1504px;top:779px;width:2px;height:1px;background:#f3f3f3"></div>
<div class="a" style="left:1676px;top:779px;width:2px;height:1px;background:#f3f3f3"></div>
<div class="a" style="left:1789px;top:779px;width:2px;height:1px;background:#f3f3f3"></div>
<div class="td" style="left:215px;top:753px;width:55px;text-align:center">12</div>
<div class="td" style="left:286px;top:753px">11129</div>
<div class="td u" style="right:767px;top:752px">0.00</div>
<div class="td u" style="right:655px;top:752px">0</div>
<div class="td u" style="right:257px;top:752px">0.00</div>
<div class="td u" style="right:145px;top:752px">0</div>
<div class="hl" style="left:215px;top:815px;width:1670px"></div>
<div class="a" style="left:270px;top:815px;width:2px;height:1px;background:#f3f3f3"></div>
<div class="a" style="left:500px;top:815px;width:2px;height:1px;background:#f3f3f3"></div>
<div class="a" style="left:770px;top:815px;width:2px;height:1px;background:#f3f3f3"></div>
<div class="a" style="left:882px;top:815px;width:2px;height:1px;background:#f3f3f3"></div>
<div class="a" style="left:995px;top:815px;width:2px;height:1px;background:#f3f3f3"></div>
<div class="a" style="left:1167px;top:815px;width:2px;height:1px;background:#f3f3f3"></div>
<div class="a" style="left:1279px;top:815px;width:2px;height:1px;background:#f3f3f3"></div>
<div class="a" style="left:1392px;top:815px;width:2px;height:1px;background:#f3f3f3"></div>
<div class="a" style="left:1504px;top:815px;width:2px;height:1px;background:#f3f3f3"></div>
<div class="a" style="left:1676px;top:815px;width:2px;height:1px;background:#f3f3f3"></div>
<div class="a" style="left:1789px;top:815px;width:2px;height:1px;background:#f3f3f3"></div>
<div class="td" style="left:215px;top:789px;width:55px;text-align:center">13</div>
<div class="td" style="left:286px;top:789px">K1006</div>
<div class="td u" style="right:767px;top:788px">0.00</div>
<div class="td u" style="right:655px;top:788px">0</div>
<div class="td u" style="right:257px;top:788px">0.00</div>
<div class="td u" style="right:145px;top:788px">0</div>
<div class="a" style="left:215px;top:807px;width:1670px;height:36px;background:#fcefdb"></div>
<div class="a" style="left:215px;top:806px;width:1670px;height:1px;background:#dedede"></div>
<div class="vl" style="left:270px;top:807px;height:52px;background:#e0e0e0"></div>
<div class="td" style="left:286px;top:815px;font-size:14px;letter-spacing:0">合计</div>
<div class="td" style="right:767px;top:816px;font-weight:bold">1,099.00</div>
<div class="td" style="right:655px;top:816px;font-weight:bold">2</div>
<div class="td" style="right:257px;top:816px;font-weight:bold">900.00</div>
<div class="td" style="right:145px;top:816px;font-weight:bold">1</div>
<div class="a" style="left:215px;top:842px;width:1670px;height:2px;background:#dcdcdc"></div>
<div class="a" style="left:273px;top:847px;width:512px;height:10px;background:#ababab;border-radius:5px"></div>
<div class="a" style="left:215px;top:859px;width:1670px;height:1px;background:#e2e2e2"></div>
<div class="a" style="left:1875px;top:351px;width:10px;height:339px;background:#ababab;border-radius:5px"></div>
<div class="a" style="left:492px;top:375px;width:140px;height:15px;background:#fcfcfc;border-radius:7px"></div>
<div class="a" style="left:492px;top:411px;width:140px;height:15px;background:#fcfcfc;border-radius:7px"></div>
<div class="a" style="left:492px;top:447px;width:140px;height:15px;background:#fcfcfc;border-radius:7px"></div>
<div class="a" style="left:492px;top:483px;width:140px;height:15px;background:#fcfcfc;border-radius:7px"></div>
<div class="a" style="left:492px;top:519px;width:140px;height:15px;background:#fcfcfc;border-radius:7px"></div>
<div class="a" style="left:492px;top:555px;width:140px;height:15px;background:#fcfcfc;border-radius:7px"></div>
<div class="a" style="left:492px;top:591px;width:140px;height:15px;background:#fcfcfc;border-radius:7px"></div>
<div class="a" style="left:492px;top:627px;width:140px;height:15px;background:#fcfcfc;border-radius:7px"></div>
<div class="a" style="left:492px;top:663px;width:140px;height:15px;background:#fcfcfc;border-radius:7px"></div>
<div class="a" style="left:492px;top:699px;width:140px;height:15px;background:#fcfcfc;border-radius:7px"></div>
<div class="a" style="left:492px;top:735px;width:140px;height:15px;background:#fcfcfc;border-radius:7px"></div>
<div class="a" style="left:492px;top:771px;width:140px;height:15px;background:#fcfcfc;border-radius:7px"></div>
<div class="a" style="left:504px;top:355px;width:18px;height:18px;background:#f4f4f4"></div>
<div class="a" style="left:522px;top:355px;width:18px;height:18px;background:#fbfbfb"></div>
<div class="a" style="left:504px;top:391px;width:18px;height:18px;background:#e9e9e9"></div>
<div class="a" style="left:522px;top:391px;width:18px;height:18px;background:#d9d9d9"></div>
<div class="a" style="left:540px;top:391px;width:18px;height:18px;background:#d6d6d6"></div>
<div class="a" style="left:558px;top:391px;width:18px;height:18px;background:#cccccc"></div>
<div class="a" style="left:576px;top:391px;width:18px;height:18px;background:#d9d9d9"></div>
<div class="a" style="left:594px;top:391px;width:18px;height:18px;background:#d6d6d6"></div>
<div class="a" style="left:504px;top:427px;width:18px;height:18px;background:#ececec"></div>
<div class="a" style="left:522px;top:427px;width:18px;height:18px;background:#cfcfcf"></div>
<div class="a" style="left:540px;top:427px;width:18px;height:18px;background:#fcfcfc"></div>
<div class="a" style="left:504px;top:463px;width:18px;height:18px;background:#ececec"></div>
<div class="a" style="left:522px;top:463px;width:18px;height:18px;background:#dadada"></div>
<div class="a" style="left:540px;top:463px;width:18px;height:18px;background:#fcfcfc"></div>
<div class="a" style="left:504px;top:499px;width:18px;height:18px;background:#ececec"></div>
<div class="a" style="left:522px;top:499px;width:18px;height:18px;background:#c7c7c7"></div>
<div class="a" style="left:540px;top:499px;width:18px;height:18px;background:#cccccc"></div>
<div class="a" style="left:558px;top:499px;width:18px;height:18px;background:#dcdcdc"></div>
<div class="a" style="left:576px;top:499px;width:18px;height:18px;background:#dcdcdc"></div>
<div class="a" style="left:594px;top:499px;width:18px;height:18px;background:#dadada"></div>
<div class="a" style="left:612px;top:499px;width:18px;height:18px;background:#f8f8f8"></div>
<div class="a" style="left:504px;top:535px;width:18px;height:18px;background:#ececec"></div>
<div class="a" style="left:522px;top:535px;width:18px;height:18px;background:#cecece"></div>
<div class="a" style="left:540px;top:535px;width:18px;height:18px;background:#e6e6e6"></div>
<div class="a" style="left:558px;top:535px;width:18px;height:18px;background:#e4e4e4"></div>
<div class="a" style="left:504px;top:571px;width:18px;height:18px;background:#f0f0f0"></div>
<div class="a" style="left:522px;top:571px;width:18px;height:18px;background:#d9d9d9"></div>
<div class="a" style="left:540px;top:571px;width:18px;height:18px;background:#f3f3f3"></div>
<div class="a" style="left:504px;top:607px;width:18px;height:18px;background:#f3f3f3"></div>
<div class="a" style="left:522px;top:607px;width:18px;height:18px;background:#dedede"></div>
<div class="a" style="left:540px;top:607px;width:18px;height:18px;background:#f2f2f2"></div>
<div class="a" style="left:504px;top:643px;width:18px;height:18px;background:#fffcfc"></div>
<div class="a" style="left:522px;top:643px;width:18px;height:18px;background:#ffd4d6"></div>
<div class="a" style="left:540px;top:643px;width:18px;height:18px;background:#ffccce"></div>
<div class="a" style="left:558px;top:643px;width:18px;height:18px;background:#ffc4c6"></div>
<div class="a" style="left:576px;top:643px;width:18px;height:18px;background:#ffecec"></div>
<div class="a" style="left:504px;top:679px;width:18px;height:18px;background:#e9e9e9"></div>
<div class="a" style="left:522px;top:679px;width:18px;height:18px;background:#d0d0d0"></div>
<div class="a" style="left:540px;top:679px;width:18px;height:18px;background:#cdcdcd"></div>
<div class="a" style="left:558px;top:679px;width:18px;height:18px;background:#e0e0e0"></div>
<div class="a" style="left:576px;top:679px;width:18px;height:18px;background:#e4e4e4"></div>
<div class="a" style="left:504px;top:715px;width:18px;height:18px;background:#efefef"></div>
<div class="a" style="left:522px;top:715px;width:18px;height:18px;background:#cccccc"></div>
<div class="a" style="left:540px;top:715px;width:18px;height:18px;background:#c8c8c8"></div>
<div class="a" style="left:558px;top:715px;width:18px;height:18px;background:#d6d6d6"></div>
<div class="a" style="left:504px;top:751px;width:18px;height:18px;background:#efefef"></div>
<div class="a" style="left:522px;top:751px;width:18px;height:18px;background:#dedede"></div>
<div class="a" style="left:540px;top:751px;width:18px;height:18px;background:#d1d1d1"></div>
<div class="a" style="left:558px;top:751px;width:18px;height:18px;background:#ffffff"></div>
<div class="a" style="left:504px;top:787px;width:18px;height:18px;background:#f3f3f3"></div>
<div class="a" style="left:522px;top:787px;width:18px;height:18px;background:#cfcfcf"></div>
<div class="a" style="left:540px;top:787px;width:18px;height:18px;background:#e6e6e6"></div>
<div class="a" style="left:558px;top:787px;width:18px;height:18px;background:#dedede"></div>
<div class="a" style="left:576px;top:787px;width:18px;height:18px;background:#f0f0f0"></div>
<div class="a" style="left:504px;top:345px;width:36px;height:10px;background:#f0f0f0;border-radius:18px 18px 0 0"></div>
<div class="td" style="left:552px;top:752px;font-size:13px;letter-spacing:0;width:18px;overflow:hidden;color:#333">车</div>
<div class="a" style="left:496px;top:807px;width:170px;height:35px;background:rgba(255,255,255,0.12)"></div>
<div class="a" style="left:572px;top:842px;width:66px;height:13px;background:#cdcdcd;border-radius:0 0 50% 50% / 0 0 100% 100%"></div>
</body></html>
